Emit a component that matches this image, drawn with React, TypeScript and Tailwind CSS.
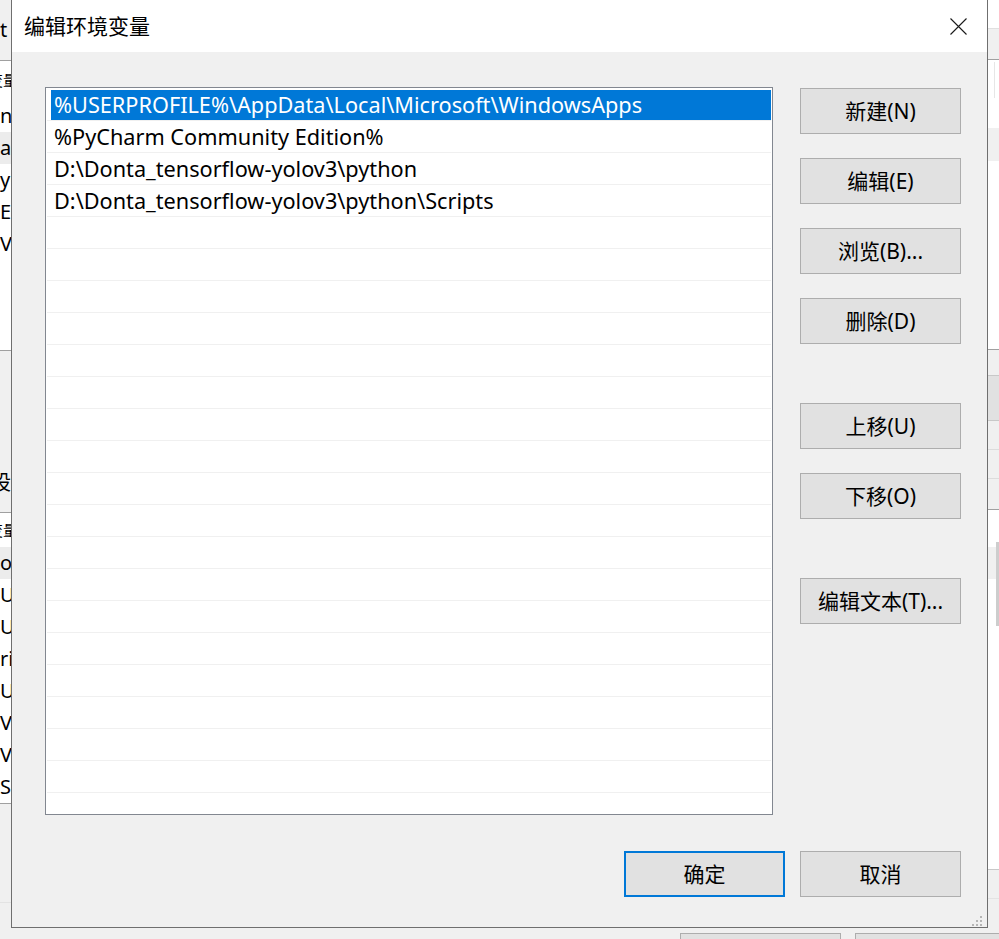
import React from "react";

const rows = [
  "%USERPROFILE%\\AppData\\Local\\Microsoft\\WindowsApps",
  "%PyCharm Community Edition%",
  "D:\\Donta_tensorflow-yolov3\\python",
  "D:\\Donta_tensorflow-yolov3\\python\\Scripts",
];

function Btn({ label, className = "" }: { label: string; className?: string }) {
  return (
    <div
      className={`w-[161px] h-[46px] shrink-0 flex items-center justify-center border border-[#adadad] bg-[#e1e1e1] text-[21px] leading-none text-black ${className}`}
    >
      {label}
    </div>
  );
}

function LeftStrip() {
  const top = ["n", "at", "yC", "EM", "VI"];
  const bottom = ["o", "U", "U", "ri", "U", "V", "V", "S"];
  return (
    <div className="w-[11px] shrink-0 overflow-hidden flex flex-col whitespace-nowrap">
      <div className="h-[60px] flex items-center text-[20px] leading-none">t</div>
      <div className="bg-white border-y border-[#a0a0a0] flex flex-col">
        <div className="h-[39px] flex items-center text-[15px] leading-none">
          <span className="ml-[-12px]">变量</span>
        </div>
        {top.map((t, i) => (
          <div
            key={i}
            className={`h-[32px] flex items-center text-[20px] leading-none ${i === 1 ? "bg-[#ececec]" : ""}`}
          >
            {t}
          </div>
        ))}
        <div className="h-[90px]" />
      </div>
      <div className="h-[161px] pt-[120px] text-[20px] leading-[24px]">
        <span className="ml-[-9px]">设</span>
      </div>
      <div className="bg-white border-y border-[#a0a0a0] flex flex-col">
        <div className="h-[34px] flex items-center text-[15px] leading-none">
          <span className="ml-[-12px]">变量</span>
        </div>
        {bottom.map((t, i) => (
          <div
            key={i}
            className={`h-[32px] flex items-center text-[20px] leading-none ${i === 0 ? "bg-[#ececec]" : ""}`}
          >
            {t}
          </div>
        ))}
      </div>
      <div className="h-[99px] border-b border-[#e3e3e3]" />
    </div>
  );
}

function RightStrip() {
  return (
    <div className="w-[11px] shrink-0 overflow-hidden flex flex-col">
      <div className="h-[29px] bg-white border-b border-[#e0e0e0]" />
      <div className="h-[31px] border-b border-[#a0a0a0]" />
      <div className="h-[290px] bg-white border-b border-[#a0a0a0] flex flex-col">
        <div className="h-[68px]">
          <div className="ml-[6px] mt-[2px] h-[36px] border-l border-[#e6e6e6]" />
        </div>
        <div className="h-[33px] bg-[#f0f0f0]" />
      </div>
      <div className="h-[25px]" />
      <div className="h-[46px] bg-[#e1e1e1] border-y border-[#c8c8c8]" />
      <div className="h-[29px] border-b border-[#dcdcdc]" />
      <div className="h-[29px] border-b border-[#dcdcdc]" />
      <div className="h-[31px] border-b border-[#a0a0a0]" />
      <div className="h-[360px] bg-white border-b border-[#c8c8c8] flex">
        <div className="w-[8px] flex flex-col">
          <div className="h-[37px]" />
          <div className="h-[32px] bg-[#f0f0f0]" />
        </div>
        <div className="w-[3px] flex flex-col">
          <div className="h-[32px]" />
          <div className="h-[84px] bg-[#cdcdcd]" />
        </div>
      </div>
      <div className="h-[29px] border-b border-[#e3e3e3]" />
    </div>
  );
}

export default function App() {
  return (
    <div className="relative w-[999px] h-[939px] overflow-hidden bg-[#f0f0f0] text-black [font-family:'Noto_Sans','Noto_Sans_CJK_SC',sans-serif]">
      <div className="flex h-[933px]">
        <LeftStrip />
        <div className="flex-1" />
        <RightStrip />
      </div>
      <div className="flex h-[6px] gap-[14px] pl-[680px]">
        <div className="w-[161px] h-full shrink-0 border border-b-0 border-[#adadad] bg-[#e1e1e1]" />
        <div className="w-[161px] h-full shrink-0 border border-b-0 border-[#adadad] bg-[#e1e1e1]" />
      </div>

      {/* dialog window */}
      <div className="absolute left-[11px] top-[-1px] w-[977px] h-[929px] border border-[#6f6f6f] bg-[#f0f0f0] flex flex-col">
        <div className="h-[52px] shrink-0 bg-white flex items-center justify-between pl-[12px] pr-[20px]">
          <span className="text-[21px] leading-none">编辑环境变量</span>
          <svg width="17" height="17" viewBox="0 0 17 17" className="shrink-0">
            <path d="M0.5 0.5 L16.5 16.5 M16.5 0.5 L0.5 16.5" stroke="#1a1a1a" strokeWidth="1.1" fill="none" />
          </svg>
        </div>

        <div className="relative flex-1 flex flex-col pl-[33px] pt-[35px]">
          <div className="flex gap-[27px]">
            <div className="w-[728px] h-[728px] shrink-0 border border-[#828790] bg-white overflow-hidden pt-[1px] px-[1px]">
              {Array.from({ length: 24 }).map((_, i) => (
                <div key={i} className="h-[32px] border-b border-[#f0f0f0] flex">
                  {i === 0 ? (
                    <div className="ml-[4px] mt-[1px] flex-1 bg-[#0078d7] text-white flex items-center pl-[3px] text-[21.7px] leading-none whitespace-nowrap">
                      {rows[i]}
                    </div>
                  ) : (
                    <div className="flex-1 flex items-center pl-[7px] text-[21.7px] leading-none whitespace-nowrap">
                      {rows[i] ?? ""}
                    </div>
                  )}
                </div>
              ))}
            </div>
            <div className="w-[161px] flex flex-col pt-[1px]">
              <Btn label="新建(N)" />
              <Btn label="编辑(E)" className="mt-[24px]" />
              <Btn label="浏览(B)..." className="mt-[24px]" />
              <Btn label="删除(D)" className="mt-[24px]" />
              <Btn label="上移(U)" className="mt-[59px]" />
              <Btn label="下移(O)" className="mt-[24px]" />
              <Btn label="编辑文本(T)..." className="mt-[59px]" />
            </div>
          </div>

          <div className="mt-[36px] flex gap-[15px] pl-[579px]">
            <div className="w-[161px] h-[46px] shrink-0 flex items-center justify-center border-2 border-[#0078d7] bg-[#e1e1e1] text-[21px] leading-none">
              确定
            </div>
            <Btn label="取消" />
          </div>

          <svg width="12" height="12" viewBox="0 0 12 12" className="absolute right-[4px] bottom-[0px]">
            <rect x="9" y="1" width="2" height="2" fill="#b5b5b5" />
            <rect x="5" y="5" width="2" height="2" fill="#b5b5b5" />
            <rect x="9" y="5" width="2" height="2" fill="#b5b5b5" />
            <rect x="1" y="9" width="2" height="2" fill="#b5b5b5" />
            <rect x="5" y="9" width="2" height="2" fill="#b5b5b5" />
            <rect x="9" y="9" width="2" height="2" fill="#b5b5b5" />
          </svg>
        </div>
      </div>
    </div>
  );
}
